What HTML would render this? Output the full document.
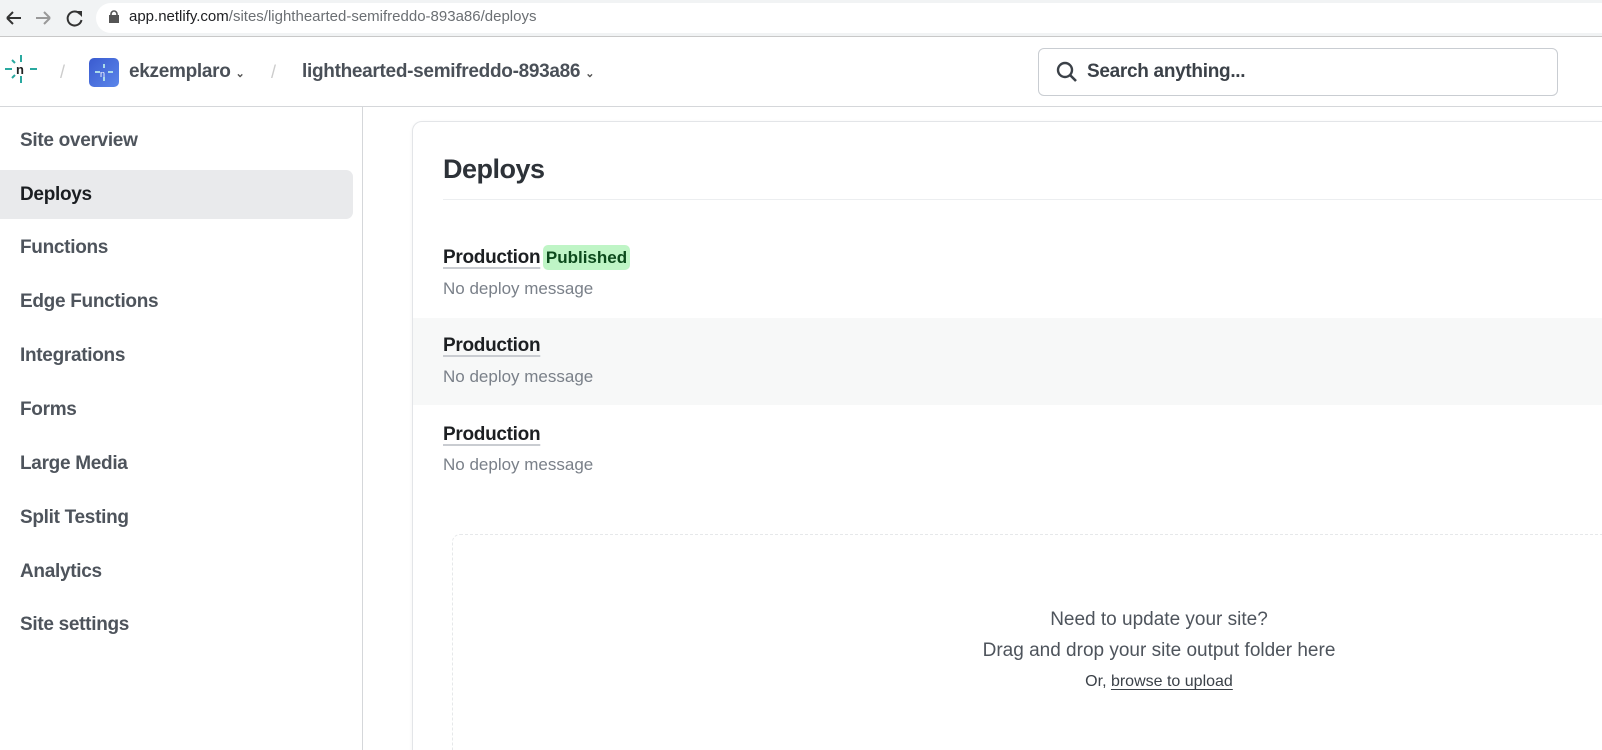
<!DOCTYPE html>
<html><head><style>
*{margin:0;padding:0;box-sizing:border-box}
html,body{width:1602px;height:750px;overflow:hidden}
body{background:#fff;font-family:"Liberation Sans",sans-serif;position:relative}
.abs{position:absolute}
.chrome{left:0;top:0;width:1602px;height:37px;background:#f1f3f4;border-bottom:1px solid #c8c8c8}
.url{left:96px;top:3px;width:1520px;height:30px;background:#fff;border-radius:15px}
.nav{font-weight:bold;color:#4a5058;font-size:19px;letter-spacing:-0.3px}
.side{left:20px;font-size:19px;font-weight:bold;color:#4e545c;letter-spacing:-0.3px}
.prod{left:443px;font-size:19px;font-weight:bold;color:#1c1f22;text-decoration:underline;text-decoration-color:#c9ccd1;text-underline-offset:4px;text-decoration-thickness:2px;letter-spacing:-0.3px}
.msg{left:443px;font-size:17px;color:#7a8089}
</style></head><body>
<div class="abs chrome"></div>
<div class="abs url"></div>
<svg class="abs" style="left:4px;top:8px" width="80" height="20" viewBox="0 0 80 20"><path d="M3 10H17M3 10l6-6M3 10l6 6" stroke="#333" stroke-width="2" fill="none"/><path d="M32 10H46M46 10l-6-6M46 10l-6 6" stroke="#999" stroke-width="2" fill="none"/><path d="M76 6a7 7 0 1 0 1.5 6" stroke="#333" stroke-width="2" fill="none"/><path d="M72 3h6v6z" fill="#333"/></svg>
<svg class="abs" style="left:109px;top:10px" width="10" height="13"><rect x="0" y="5" width="10" height="8" fill="#555"/><path d="M2 6V4a3 3 0 0 1 6 0v2" stroke="#555" stroke-width="1.6" fill="none"/></svg>
<div class="abs" style="left:129px;top:8px;font-size:15px;color:#202124">app.netlify.com<span style="color:#6b6f73">/sites/lighthearted-semifreddo-893a86/deploys</span></div>
<div class="abs" style="left:0;top:106px;width:1602px;height:1px;background:#d5d7da"></div>
<svg class="abs" style="left:5px;top:55px" width="32" height="28" viewBox="0 0 32 28"><path d="M16 0v7M16 21v7M0 14h7M25 14h7M10 8l-3-3M10 20l-3 3" stroke="#2aa9a0" stroke-width="2"/><text x="11" y="19" font-size="13" font-weight="bold" fill="#222" font-family="Liberation Sans">n</text></svg>
<div class="abs" style="left:60px;top:62px;color:#ccc;font-size:18px">/</div>
<div class="abs" style="left:89px;top:58px;width:30px;height:29px;border-radius:5px;background:linear-gradient(135deg,#3a5bd0,#5b86ea)"></div>
<svg class="abs" style="left:93px;top:62px" width="22" height="21"><path d="M11 2v4M11 15v4M2 10h5M15 10h5" stroke="#cfe" stroke-width="1.5"/><text x="7" y="15" font-size="9" fill="#fff" font-family="Liberation Sans">n</text></svg>
<div class="abs nav" style="left:129px;top:61px">ekzemplaro <span style="font-size:11px;color:#555">&#8964;</span></div>
<div class="abs" style="left:271px;top:62px;color:#ccc;font-size:18px">/</div>
<div class="abs nav" style="left:302px;top:61px">lighthearted-semifreddo-893a86 <span style="font-size:11px;color:#555">&#8964;</span></div>
<div class="abs" style="left:1038px;top:48px;width:520px;height:48px;border:1px solid #c9cdd2;border-radius:6px"></div>
<svg class="abs" style="left:1056px;top:61px" width="22" height="22"><circle cx="9" cy="9" r="7" stroke="#3b4148" stroke-width="2.4" fill="none"/><path d="M14 14l6 6" stroke="#3b4148" stroke-width="2.6"/></svg>
<div class="abs nav" style="left:1087px;top:61px;color:#3b4148">Search anything...</div>
<div class="abs" style="left:362px;top:107px;width:1px;height:643px;background:#d5d7da"></div>
<div class="abs" style="left:0;top:170px;width:353px;height:49px;background:#e9eaec;border-radius:0 7px 7px 0"></div>
<div class="abs side" style="top:130px">Site overview</div>
<div class="abs side" style="top:184px;color:#1b1e22">Deploys</div>
<div class="abs side" style="top:237px">Functions</div>
<div class="abs side" style="top:291px">Edge Functions</div>
<div class="abs side" style="top:345px">Integrations</div>
<div class="abs side" style="top:399px">Forms</div>
<div class="abs side" style="top:453px">Large Media</div>
<div class="abs side" style="top:507px">Split Testing</div>
<div class="abs side" style="top:561px">Analytics</div>
<div class="abs side" style="top:614px">Site settings</div>
<div class="abs" style="left:412px;top:121px;width:1250px;height:640px;border:1px solid #e3e5e8;border-radius:10px;box-shadow:0 1px 3px rgba(0,0,0,0.06)"></div>
<div class="abs" style="left:443px;top:154px;font-size:27px;font-weight:bold;color:#2d3238;letter-spacing:-0.5px">Deploys</div>
<div class="abs" style="left:443px;top:199px;width:1159px;height:1px;background:#eceef0"></div>
<div class="abs" style="left:413px;top:318px;width:1189px;height:87px;background:#f7f8f8"></div>
<div class="abs prod" style="top:247px">Production</div>
<div class="abs" style="left:543px;top:245px;width:87px;height:25px;background:#bff5c6;border-radius:5px;color:#0c4a1c;font-weight:bold;font-size:17px;text-align:center;line-height:25px">Published</div>
<div class="abs msg" style="top:279px">No deploy message</div>
<div class="abs prod" style="top:335px">Production</div>
<div class="abs msg" style="top:367px">No deploy message</div>
<div class="abs prod" style="top:424px">Production</div>
<div class="abs msg" style="top:455px">No deploy message</div>
<div class="abs" style="left:452px;top:534px;width:1200px;height:230px;border:1.5px dashed #e6e8ea;border-radius:8px"></div>
<div class="abs" style="left:452px;top:604px;width:1414px;text-align:center;font-size:19px;color:#4e545c;line-height:31px">Need to update your site?<br>Drag and drop your site output folder here</div>
<div class="abs" style="left:452px;top:673px;width:1414px;text-align:center;font-size:16px;color:#3b4148">Or, <span style="text-decoration:underline;text-underline-offset:3px">browse to upload</span></div>
</body></html>
